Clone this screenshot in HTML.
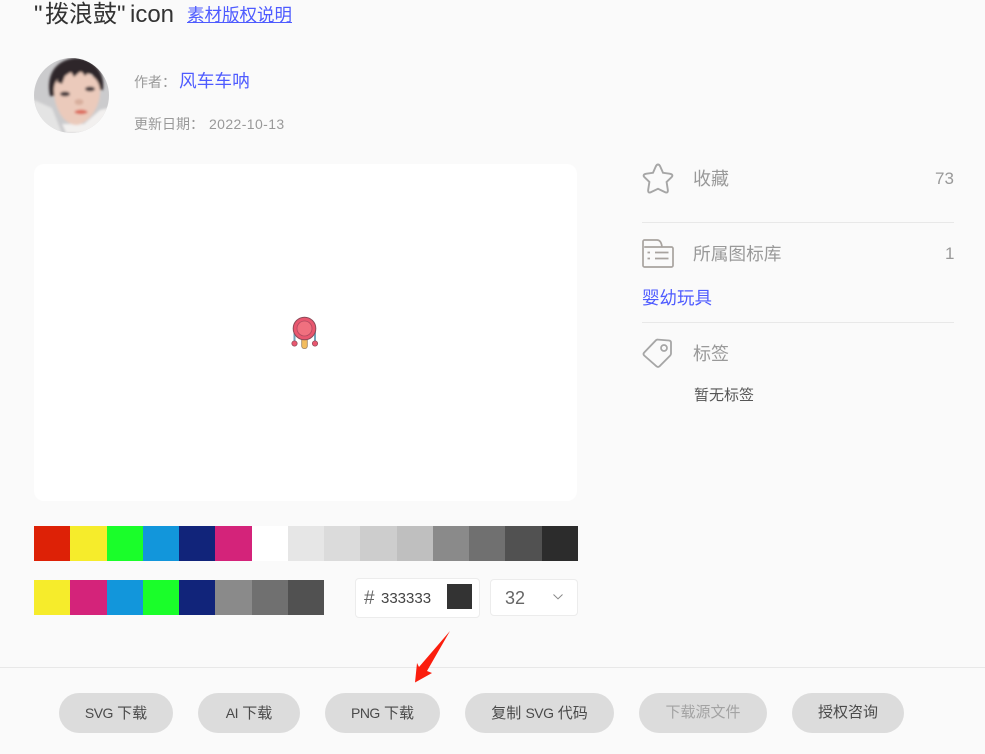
<!DOCTYPE html>
<html lang="zh"><head><meta charset="utf-8"><title>拨浪鼓 icon</title>
<style>
html,body{margin:0;padding:0;width:985px;height:754px;overflow:hidden;background:#fafafa}
body{position:relative;font-family:"Liberation Sans","Noto Sans CJK SC",sans-serif;color:#333}
.a{position:absolute;white-space:nowrap}
a{color:#4e5bff}
.s{position:absolute;height:35px}
.btn{position:absolute;top:693px;height:40px;line-height:40px;border-radius:20px;background:#dcdcdc;color:#4a4a4a;font-size:15px;text-align:center;white-space:nowrap}
.l{font-size:14px;letter-spacing:-.5px}
.g{color:#999}
.hr{position:absolute;left:642px;width:312px;height:1px;background:#e8e8e8}
.q{display:inline-block;width:11px}
.c{font-family:"Noto Sans CJK TC",sans-serif}
</style></head><body>
<div class="a" style="left:34px;top:0;font-size:24px;line-height:30px;color:#333"><span class="q">"</span>拨浪鼓<span class="q" style="width:13px">"</span>icon</div>
<a class="a" style="left:187px;top:3px;font-size:17.500px;line-height:24px;text-decoration:underline">素材版权说明</a>

<svg class="a" style="left:34px;top:58px" width="75" height="75" viewBox="0 0 75 75">
<defs><clipPath id="c"><circle cx="37.500" cy="37.500" r="37.500"/></clipPath>
<filter id="b" x="-10%" y="-10%" width="120%" height="120%"><feGaussianBlur stdDeviation="1.200"/></filter></defs>
<g clip-path="url(#c)"><rect width="75" height="75" fill="#cbcbcd"/>
<g filter="url(#b)">
<path d="M0 42L18 50 28 75H0Z" fill="#e4e4e4"/>
<path d="M28 66L50 66 66 52 75 50V75H32Z" fill="#f2f0ef"/>
<path d="M16 38C12 18 20 3 40 0 58 -2 72 14 69 32L64 32 58 16 30 16 22 24 21 38Z" fill="#2e252a"/>
<path d="M20 32C20 20 30 14 42 14 57 13 65 22 66 31 67 48 56 64 44 67 30 68 20 50 20 32Z" fill="#ebcabb"/>
<path d="M23 24L28 8 56 5 62 20 55 14 51 18 47 13 40 19 37 14 31 18 28 26Z" fill="#2e252a"/>
<ellipse cx="31" cy="36" rx="5" ry="2.500" fill="#4a3d3f"/>
<ellipse cx="56" cy="31" rx="5" ry="2.500" fill="#4a3d3f"/>
<ellipse cx="45" cy="44" rx="4.500" ry="3" fill="#d8ae9d"/>
<ellipse cx="47" cy="54" rx="6.500" ry="2.200" fill="#dc6a5c"/>
</g></g></svg>

<div class="a g" style="left:134px;top:72px;font-size:14px;line-height:20px">作者<span class="c">：</span></div>
<a class="a" style="left:179px;top:69px;font-size:17.700px;line-height:24px;text-decoration:none">风车车呐</a>
<div class="a g" style="left:134px;top:114px;font-size:14px;line-height:20px">更新日期<span class="c">：</span></div>
<div class="a g" style="left:209px;top:114px;font-size:14px;line-height:20px;letter-spacing:.4px">2022-10-13</div>

<div class="a" style="left:34px;top:164px;width:543px;height:337px;background:#fff;border-radius:10px"></div>
<svg class="a" style="left:290px;top:315px" width="30" height="35" viewBox="0 0 30 35">
<path d="M4.500 14V28M25 14V28" stroke="#6fa6bc" stroke-width="2" fill="none"/>
<rect x="11.700" y="22" width="5.600" height="11.500" rx="2.400" fill="#f3bd5e" stroke="#9b8060" stroke-width=".8"/>
<circle cx="14.500" cy="13.500" r="11.300" fill="#e9576f" stroke="#8c4a58" stroke-width="1"/>
<circle cx="14.500" cy="13.500" r="7.500" fill="#f0707f" stroke="#b04a60" stroke-width=".8"/>
<circle cx="4.500" cy="28.500" r="2.700" fill="#e9576f" stroke="#8c4a58" stroke-width=".7"/>
<circle cx="25" cy="28.500" r="2.700" fill="#e9576f" stroke="#8c4a58" stroke-width=".7"/>
</svg>

<div class="s" style="left:34px;top:526px;width:36px;background:#dd2106"></div>
<div class="s" style="left:70px;top:526px;width:37px;background:#f6ec2b"></div>
<div class="s" style="left:107px;top:526px;width:36px;background:#1afe2a"></div>
<div class="s" style="left:143px;top:526px;width:36px;background:#1296db"></div>
<div class="s" style="left:179px;top:526px;width:36px;background:#11247a"></div>
<div class="s" style="left:215px;top:526px;width:37px;background:#d4237a"></div>
<div class="s" style="left:252px;top:526px;width:36px;background:#ffffff"></div>
<div class="s" style="left:288px;top:526px;width:36px;background:#e6e6e6"></div>
<div class="s" style="left:324px;top:526px;width:36px;background:#dbdbdb"></div>
<div class="s" style="left:360px;top:526px;width:37px;background:#cdcdcd"></div>
<div class="s" style="left:397px;top:526px;width:36px;background:#bfbfbf"></div>
<div class="s" style="left:433px;top:526px;width:36px;background:#8a8a8a"></div>
<div class="s" style="left:469px;top:526px;width:36px;background:#707070"></div>
<div class="s" style="left:505px;top:526px;width:37px;background:#515151"></div>
<div class="s" style="left:542px;top:526px;width:36px;background:#2c2c2c"></div>

<div class="s" style="left:34px;top:580px;width:36px;background:#f6ec2b"></div>
<div class="s" style="left:70px;top:580px;width:37px;background:#d4237a"></div>
<div class="s" style="left:107px;top:580px;width:36px;background:#1296db"></div>
<div class="s" style="left:143px;top:580px;width:36px;background:#1afe2a"></div>
<div class="s" style="left:179px;top:580px;width:36px;background:#11247a"></div>
<div class="s" style="left:215px;top:580px;width:37px;background:#8a8a8a"></div>
<div class="s" style="left:252px;top:580px;width:36px;background:#707070"></div>
<div class="s" style="left:288px;top:580px;width:36px;background:#515151"></div>

<div class="a" style="left:355px;top:578px;width:123px;height:38px;background:#fff;border:1px solid #ececec;border-radius:4px"></div>
<div class="a" style="left:364px;top:588px;font-size:19px;line-height:22px;color:#666">#</div>
<div class="a" style="left:381px;top:589px;font-size:15px;line-height:20px;color:#444">333333</div>
<div class="a" style="left:447px;top:584px;width:25px;height:25px;background:#333"></div>
<div class="a" style="left:490px;top:579px;width:86px;height:35px;background:#fff;border:1px solid #ececec;border-radius:4px"></div>
<div class="a" style="left:505px;top:587px;font-size:18px;line-height:22px;color:#666">32</div>
<svg class="a" style="left:552px;top:593px" width="12" height="9" viewBox="0 0 12 9"><path d="M1.500 1.500L6 5.800 10.500 1.500" fill="none" stroke="#888" stroke-width="1"/></svg>

<svg class="a" style="left:642px;top:163px" width="32" height="32" viewBox="0 0 32 32"><path d="M16 1.500C17 1.500 17.700 2.300 18.300 3.600L21 9.800 27.500 10.700C30.500 11.100 31.200 12.600 29.400 14.300L24.600 19 25.800 26.700C26.200 29.400 25 30.200 22.700 29L16 25.800 9.300 29C7 30.200 5.800 29.400 6.200 26.700L7.400 19 2.600 14.300C.8 12.600 1.500 11.100 4.500 10.700L11 9.800 13.700 3.600C14.300 2.300 15 1.500 16 1.500Z" fill="none" stroke="#a6a6a6" stroke-width="1.900"/></svg>
<div class="a g" style="left:693px;top:166px;font-size:18px;line-height:26px">收藏</div>
<div class="a g" style="left:935px;top:167px;font-size:17px;line-height:24px">73</div>
<div class="hr" style="top:222px"></div>

<svg class="a" style="left:642px;top:238px" width="32" height="31" viewBox="0 0 32 31"><path d="M2.200 9H29.500C30.300 9 31 9.700 31 10.500V27.500C31 28.300 30.300 29 29.500 29H2.500C1.700 29 1 28.300 1 27.500V3.500C1 2.700 1.700 2 2.500 2H15C18 2 19.500 4.500 20 9" fill="none" stroke="#a8a39f" stroke-width="1.700"/><path d="M5.500 14.500H8M13 14.500H26.500M5.500 20.500H8M13 20.500H26.500" fill="none" stroke="#a8a39f" stroke-width="1.700"/></svg>
<div class="a g" style="left:693px;top:241px;font-size:17.700px;line-height:26px">所属图标库</div>
<div class="a g" style="left:945px;top:242px;font-size:17px;line-height:24px">1</div>
<a class="a" style="left:642px;top:286px;font-size:17.500px;line-height:24px;text-decoration:none">婴幼玩具</a>
<div class="hr" style="top:322px"></div>

<svg class="a" style="left:642px;top:338px" width="32" height="32" viewBox="0 0 32 32"><path d="M14 2.200Q14.800 1.500 16 1.600L27 2.500Q29 2.700 29 4.500L29 15.500Q29 16.800 28 17.800L17.500 28.300Q16 29.500 14.500 28.300L2.200 17.500Q.8 16 2.200 14.500Z" fill="none" stroke="#a6a6a6" stroke-width="1.800"/><circle cx="22" cy="10" r="3" fill="none" stroke="#a6a6a6" stroke-width="1.700"/></svg>
<div class="a g" style="left:693px;top:341px;font-size:18px;line-height:26px">标签</div>
<div class="a" style="left:694px;top:386px;font-size:15px;line-height:20px;color:#555">暂无标签</div>

<div class="a" style="left:0;top:667px;width:985px;height:1px;background:#e8e8e8"></div>
<div class="btn" style="left:59px;width:114px"><span class="l">SVG</span> 下载</div>
<div class="btn" style="left:198px;width:102px"><span class="l">AI</span> 下载</div>
<div class="btn" style="left:325px;width:115px"><span class="l">PNG</span> 下载</div>
<div class="btn" style="left:465px;width:149px">复制 <span class="l">SVG</span> 代码</div>
<div class="btn" style="left:639px;width:128px;color:#a3a3a3">下载源文件</div>
<div class="btn" style="left:792px;width:112px">授权咨询</div>

<svg class="a" style="left:410px;top:625px" width="45" height="62" viewBox="0 0 45 62"><path d="M40 6L9 42 7 38 5 57.500 22 48 17 46Z" fill="#fb1d0d"/></svg>
</body></html>
